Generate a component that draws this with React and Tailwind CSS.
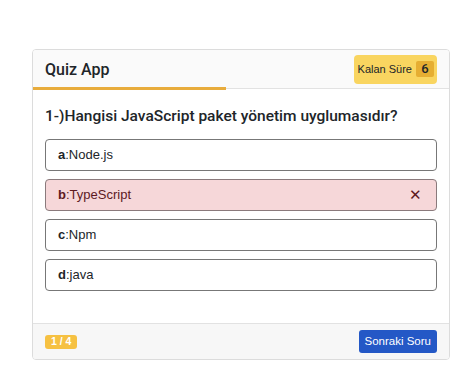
import React from 'react';

const options = [
  { key: 'a', text: 'Node.js' },
  { key: 'b', text: 'TypeScript', wrong: true },
  { key: 'c', text: 'Npm' },
  { key: 'd', text: 'java' },
];

function App() {
  return (
    <div className="min-h-[391px] bg-white pt-[49px] pl-[32px] font-['Liberation_Sans',Arial,sans-serif] text-[#212529]">
      <div className="w-[418px] h-[311px] flex flex-col border border-[#dcdcdc] rounded-[4px] overflow-hidden">
        {/* header */}
        <div className="relative h-[39px] flex items-center justify-between pl-[12px] pr-[12px] bg-[#fafafa] border-b border-[#e2e2e2]">
          <span className="font-['Roboto',sans-serif] text-[16px] font-medium pt-[2px]">Quiz App</span>
          <div className="flex items-center h-[29px] pl-[4px] pr-[3px] bg-[#f9d560] rounded-[4px] text-[11px] gap-[4px]">
            <span>Kalan Süre</span>
            <span className="h-[16px] w-[18px] flex items-center justify-center bg-[#e6ae32] rounded-[2px] font-['Roboto',sans-serif] text-[13px] font-medium">6</span>
          </div>
          <div className="absolute left-0 bottom-[-2px] h-[3px] w-[193px] bg-[#e8ac3c]" />
        </div>

        {/* body */}
        <div className="flex-1 px-[12px] pt-[16px]">
          <h2 className="font-['Roboto',sans-serif] text-[15.5px] font-medium mb-[12px] leading-[22px] whitespace-nowrap">1-)Hangisi JavaScript paket yönetim uyglumasıdır?</h2>
          <div className="flex flex-col gap-[8px]">
            {options.map((o) => (
              <div
                key={o.key}
                className={
                  o.wrong
                    ? 'h-[32px] flex items-center justify-between px-[12px] border border-[#8a7a7c] rounded-[4px] bg-[#f6d7d9] text-[#5c1a1f] text-[13px]'
                    : 'h-[32px] flex items-center justify-between px-[12px] border border-[#777] rounded-[4px] bg-white text-[13px]'
                }
              >
                <span>
                  <b>{o.key}</b>:{o.text}
                </span>
                {o.wrong && <span className="text-[15px] pr-[2px]">✕</span>}
              </div>
            ))}
          </div>
        </div>

        {/* footer */}
        <div className="h-[36px] flex items-center justify-between px-[12px] bg-[#f7f7f7] border-t border-[#e2e2e2]">
          <span className="h-[14px] px-[6px] flex items-center rounded-[3px] bg-[#f6c142] text-white text-[10.5px] font-bold">1 / 4</span>
          <button className="h-[23px] px-[6px] rounded-[3px] bg-[#2458c6] text-white text-[11.5px]">Sonraki Soru</button>
        </div>
      </div>
    </div>
  );
}

export default App;
